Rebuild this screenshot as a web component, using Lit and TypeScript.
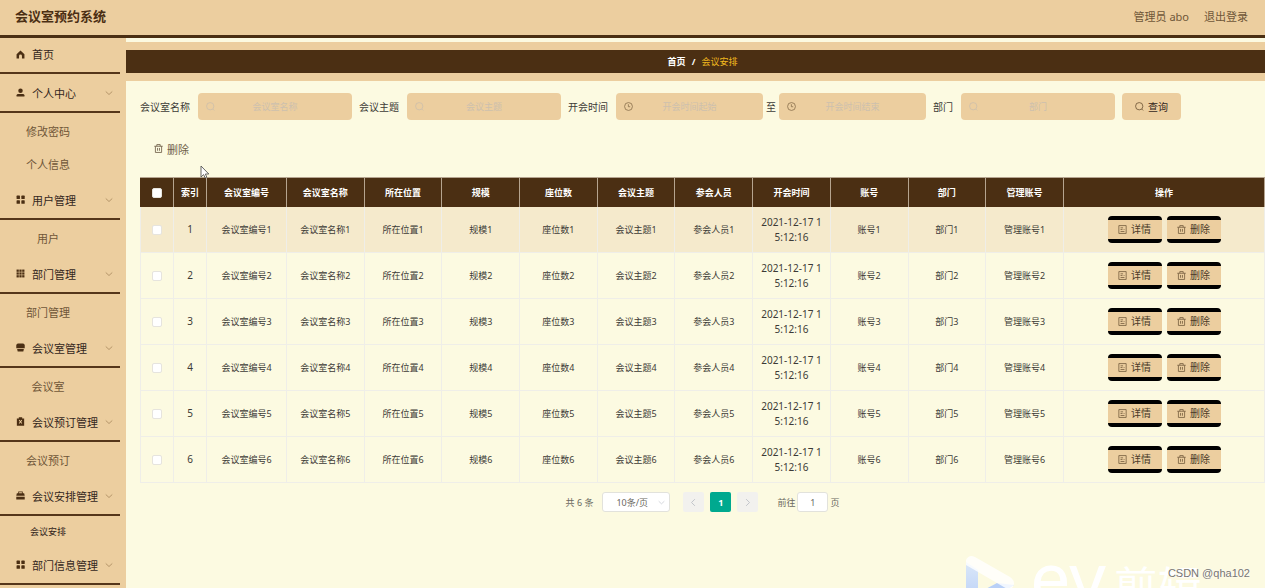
import { LitElement, html, css, svg, nothing } from "lit";
import { customElement, state } from "lit/decorators.js";
import { classMap } from "lit/directives/class-map.js";

interface MenuGroup {
  label: string;
  icon: string;
  children: { label: string; active?: boolean }[];
}

const MENU: MenuGroup[] = [
  { label: "首页", icon: "home", children: [] },
  { label: "个人中心", icon: "user", children: [{ label: "修改密码" }, { label: "个人信息" }] },
  { label: "用户管理", icon: "menu", children: [{ label: "用户" }] },
  { label: "部门管理", icon: "grid", children: [{ label: "部门管理" }] },
  { label: "会议室管理", icon: "room", children: [{ label: "会议室" }] },
  { label: "会议预订管理", icon: "release", children: [{ label: "会议预订" }] },
  { label: "会议安排管理", icon: "bag", children: [{ label: "会议安排", active: true }] },
  { label: "部门信息管理", icon: "menu", children: [] },
];

const COLUMNS = ["会议室编号", "会议室名称", "所在位置", "规模", "座位数", "会议主题", "参会人员", "开会时间", "账号", "部门", "管理账号"];

const GLYPHS: Record<string, unknown> = {
  home: svg`<path fill="currentColor" d="M8 1 L15 7.5 V15 H10.6 V10.5 A2.6 2.6 0 0 0 5.4 10.5 V15 H1 V7.5 Z"/>`,
  user: svg`<circle cx="8" cy="5" r="4" fill="currentColor"/><path fill="currentColor" d="M1 15 V13 Q1 10.5 4 10.5 H12 Q15 10.5 15 13 V15 Z"/>`,
  menu: svg`<g fill="currentColor"><rect x="1" y="1" width="6" height="6" rx="1"/><rect x="9.5" y="1" width="6" height="6" rx="1"/><rect x="1" y="9.5" width="6" height="6" rx="1"/><rect x="9.5" y="9.5" width="6" height="6" rx="1"/></g>`,
  grid: svg`<g fill="currentColor"><rect x="1" y="1" width="4" height="4"/><rect x="6" y="1" width="4" height="4"/><rect x="11" y="1" width="4" height="4"/><rect x="1" y="6" width="4" height="4"/><rect x="6" y="6" width="4" height="4"/><rect x="11" y="6" width="4" height="4"/><rect x="1" y="11" width="4" height="4"/><rect x="6" y="11" width="4" height="4"/><rect x="11" y="11" width="4" height="4"/></g>`,
  room: svg`<path fill="currentColor" d="M3 1 H13 L15.5 3 V9.5 H.5 V3 Z M2 10.8 H14 L13 15 H3 Z"/>`,
  release: svg`<path fill="currentColor" fill-rule="evenodd" d="M1.5 2.5 H5 V.5 H11 V2.5 H14.5 V15.5 H1.5 Z M5 6 L7 8.5 L5 11 L6 12 L8 9.8 L10 12 L11 11 L9 8.5 L11 6 L10 5 L8 7.3 L6 5 Z"/>`,
  bag: svg`<path fill="currentColor" fill-rule="evenodd" d="M4 4 V1 H12 V4 H14.5 L15.5 8.5 H.5 L1.5 4 Z M5.5 4 H10.5 V2.4 H5.5 Z M.5 10 H15.5 V15 H.5 Z"/>`,
  down: svg`<path class="line" d="M1.5 5 L8 11 L14.5 5"/>`,
  left: svg`<path class="line" d="M10.5 2 L4.5 8 L10.5 14"/>`,
  right: svg`<path class="line" d="M5.5 2 L11.5 8 L5.5 14"/>`,
  search: svg`<circle class="line" cx="7.5" cy="7.5" r="6.5"/><path class="line" d="M12 12.5 L14.5 15"/>`,
  clock: svg`<circle class="line" cx="8" cy="8" r="7"/><path class="line" d="M7.8 4 V8.4 H11"/>`,
  trash: svg`<path class="line" d="M.5 4 H15.5 M5 4 V1 H11 V4 M2.5 4 V15 H13.5 V4 M6.3 7 V12 M9.7 7 V12"/>`,
  doc: svg`<path class="line" d="M1.5 1 H14.5 V15 H1.5 Z M4.5 5 H9 M4.5 8 H8 M4.5 11.5 H11.5 M10 8 H11.5"/>`,
};

const icon = (name: string, cls = "") =>
  html`<svg class="icon ${cls}" viewBox="0 0 16 16" aria-hidden="true">${GLYPHS[name]}</svg>`;

const shared = css`
  * {
    box-sizing: border-box;
  }
  a {
    color: inherit;
    text-decoration: none;
  }
  button,
  input,
  select {
    font: inherit;
    color: inherit;
    margin: 0;
  }
  button {
    cursor: pointer;
  }
  .icon {
    width: 9px;
    height: 9px;
    flex: none;
    display: block;
  }
  .line {
    fill: none;
    stroke: currentColor;
    stroke-width: 1.5;
  }
`;

@customElement("side-menu")
export class SideMenu extends LitElement {
  static styles = [
    shared,
    css`
      :host {
        display: block;
        width: 126px;
        flex: none;
        background: #ecce9f;
        overflow: hidden;
        font-size: 11px;
      }
      .list,
      .sub {
        list-style: none;
        margin: 0;
        padding: 0;
      }
      .head {
        display: flex;
        align-items: center;
        gap: 7px;
        height: 39px;
        margin-right: 6px;
        padding: 0 7px 0 16px;
        border-bottom: 2px solid #55361a;
        color: #33261c;
      }
      .head.first {
        height: 36px;
        padding-bottom: 2px;
      }
      .icon {
        color: #4b2f13;
      }
      .label {
        flex: 1;
        white-space: nowrap;
      }
      .icon.arrow {
        width: 8px;
        height: 8px;
        color: #a38358;
      }
      .sub {
        padding: 1px 0;
      }
      .link {
        display: flex;
        align-items: center;
        justify-content: center;
        height: 33px;
        margin-right: 30px;
        color: #6f5638;
      }
      .link.active {
        height: 28px;
        font-size: 9px;
        color: #33261c;
      }
    `,
  ];

  render() {
    return html`<nav>
      <ul class="list">
        ${MENU.map(
          (g, i) => html`<li>
            <a class=${classMap({ head: true, first: i === 0 })} href="#">
              ${icon(g.icon)}<span class="label">${g.label}</span>${i ? icon("down", "arrow") : nothing}
            </a>
            ${g.children.length
              ? html`<ul class="sub">
                  ${g.children.map(
                    (c) => html`<li><a class=${classMap({ link: true, active: !!c.active })} href="#">${c.label}</a></li>`
                  )}
                </ul>`
              : nothing}
          </li>`
        )}
      </ul>
    </nav>`;
  }
}

@customElement("filter-bar")
export class FilterBar extends LitElement {
  static styles = [
    shared,
    css`
      :host {
        display: block;
        font-size: 10px;
        color: #3c3a36;
      }
      .form {
        display: flex;
        flex-wrap: wrap;
        align-items: center;
        gap: 7px;
      }
      .field {
        display: flex;
        align-items: center;
        gap: 8px;
      }
      .range {
        display: flex;
        align-items: center;
        gap: 3px;
      }
      .box {
        position: relative;
        display: flex;
        align-items: center;
        width: 154px;
        color: #cdbfab;
      }
      .box.time {
        width: 147px;
        color: #8c7350;
      }
      .box .icon {
        position: absolute;
        left: 8px;
      }
      .input {
        width: 100%;
        height: 27px;
        border: 0;
        border-radius: 4px;
        padding: 0 20px;
        background: #ecce9f;
        text-align: center;
        font-size: 9px;
        color: #4b2f13;
      }
      .input::placeholder {
        color: #cdc0ae;
        opacity: 1;
      }
      .query {
        display: flex;
        align-items: center;
        justify-content: center;
        gap: 4px;
        width: 59px;
        height: 27px;
        padding: 0;
        border: 0;
        border-radius: 4px;
        background: #ecce9f;
        color: #33261c;
        font-size: 10px;
      }
      .query .icon {
        color: #6f5638;
      }
    `,
  ];

  private text(id: string, label: string) {
    return html`<div class="field">
      <label for=${id}>${label}</label>
      <div class="box">${icon("search")}<input class="input" id=${id} placeholder=${label} /></div>
    </div>`;
  }

  render() {
    return html`<form class="form" @submit=${(e: Event) => e.preventDefault()}>
      ${this.text("name", "会议室名称")} ${this.text("topic", "会议主题")}
      <div class="field">
        <label for="start">开会时间</label>
        <div class="range">
          <div class="box time">${icon("clock")}<input class="input" id="start" placeholder="开会时间起始" /></div>
          <label for="end">至</label>
          <div class="box time">${icon("clock")}<input class="input" id="end" placeholder="开会时间结束" /></div>
        </div>
      </div>
      ${this.text("dept", "部门")}
      <button class="query" type="submit">${icon("search")}<span>查询</span></button>
    </form>`;
  }
}

@customElement("meeting-table")
export class MeetingTable extends LitElement {
  @state() private rows = [1, 2, 3, 4, 5, 6];

  static styles = [
    shared,
    css`
      :host {
        display: block;
        font-size: 9px;
        color: #3c3a36;
      }
      .table {
        width: 100%;
        table-layout: fixed;
        border-collapse: separate;
        border-spacing: 0;
      }
      .check {
        width: 34px;
      }
      .index {
        width: 33px;
      }
      .code {
        width: 80px;
      }
      .ops {
        width: 201px;
      }
      th {
        height: 30px;
        padding: 0;
        background: #4b2f13;
        color: #fff;
        font-weight: 700;
        border-right: 1px solid #b5a48f;
        border-top: 1px solid #b5a48f;
      }
      td {
        height: 46px;
        padding: 0 7px;
        text-align: center;
        word-break: break-all;
        line-height: 15px;
        border-right: 1px solid #efeee8;
        border-bottom: 1px solid #efeee8;
      }
      tr.hover td {
        background: #f5eacc;
      }
      th:first-child,
      td:first-child,
      .num {
        padding: 0;
      }
      td:first-child {
        border-left: 1px solid #efeee8;
      }
      .num,
      .date {
        font-size: 10px;
      }
      .tick {
        appearance: none;
        display: block;
        width: 10px;
        height: 10px;
        margin: 0 auto;
        border: 1px solid #e6e4de;
        border-radius: 2px;
        background: #fff;
      }
      .tick:checked {
        background: #00a98f;
      }
      .actions {
        display: flex;
        justify-content: center;
        gap: 5px;
      }
      .act {
        display: flex;
        align-items: center;
        justify-content: center;
        gap: 4px;
        width: 54px;
        height: 27px;
        padding: 0;
        border: solid #000;
        border-width: 4px 0;
        border-radius: 4px;
        background: #ecce9f;
        color: #4a3a28;
        font-size: 10px;
        line-height: 15px;
      }
      .act .icon {
        color: #7a6242;
      }
    `,
  ];

  render() {
    return html`<table class="table">
      <colgroup>
        <col class="check" />
        <col class="index" />
        <col class="code" />
        ${COLUMNS.slice(1).map(() => html`<col />`)}
        <col class="ops" />
      </colgroup>
      <thead>
        <tr>
          <th><input class="tick" type="checkbox" aria-label="全选" /></th>
          <th>索引</th>
          ${COLUMNS.map((c) => html`<th>${c}</th>`)}
          <th>操作</th>
        </tr>
      </thead>
      <tbody>
        ${this.rows.map(
          (n) => html`<tr class=${classMap({ hover: n === 1 })}>
            <td><input class="tick" type="checkbox" aria-label="选择" /></td>
            <td class="num">${n}</td>
            ${COLUMNS.map((c) => (c === "开会时间" ? html`<td class="date">2021-12-17 15:12:16</td>` : html`<td>${c}${n}</td>`))}
            <td>
              <div class="actions">
                <button class="act" type="button">${icon("doc")}<span>详情</span></button>
                <button class="act" type="button">${icon("trash")}<span>删除</span></button>
              </div>
            </td>
          </tr>`
        )}
      </tbody>
    </table>`;
  }
}

@customElement("page-bar")
export class PageBar extends LitElement {
  static styles = [
    shared,
    css`
      :host {
        display: flex;
        align-items: center;
        justify-content: center;
        font-size: 9px;
        color: #6a6860;
      }
      .size {
        position: relative;
        display: flex;
        align-items: center;
        margin: 0 13px 0 9px;
      }
      .select {
        appearance: none;
        width: 68px;
        height: 20px;
        padding: 0 12px 0 13px;
        border: 1px solid #e2e2dc;
        border-radius: 3px;
        background: #fff;
      }
      .size .icon {
        position: absolute;
        right: 5px;
        width: 7px;
        height: 7px;
        color: #c0c4cc;
        pointer-events: none;
      }
      .pages {
        display: flex;
        gap: 6px;
      }
      .page {
        display: flex;
        align-items: center;
        justify-content: center;
        width: 21px;
        height: 20px;
        padding: 0;
        border: 0;
        border-radius: 2px;
        background: #f2f1ee;
        color: #b9bcc4;
      }
      .page.current {
        background: #00a98f;
        color: #fff;
        font-weight: 700;
      }
      .jump {
        display: flex;
        align-items: center;
        gap: 2px;
        margin-left: 19px;
      }
      .goto {
        width: 31px;
        height: 20px;
        padding: 0;
        border: 1px solid #e2e2dc;
        border-radius: 3px;
        background: #fff;
        text-align: center;
      }
    `,
  ];

  render() {
    return html`
      <span>共 6 条</span>
      <div class="size">
        <select class="select" aria-label="每页条数">
          <option>10条/页</option>
        </select>
        ${icon("down")}
      </div>
      <div class="pages">
        <button class="page" type="button" aria-label="上一页">${icon("left")}</button>
        <button class="page current" type="button">1</button>
        <button class="page" type="button" aria-label="下一页">${icon("right")}</button>
      </div>
      <div class="jump">
        <label for="goto">前往</label><input class="goto" id="goto" value="1" /><span>页</span>
      </div>
    `;
  }
}

@customElement("app-root")
export class AppRoot extends LitElement {
  static styles = [
    shared,
    css`
      :host {
        position: relative;
        display: flex;
        flex-direction: column;
        height: 100vh;
        overflow: hidden;
        background: #fcfae1;
        font-family: "Noto Sans", "Noto Sans CJK SC", sans-serif;
        font-size: 10px;
      }
      .top {
        display: flex;
        align-items: center;
        justify-content: space-between;
        flex: none;
        height: 38px;
        padding: 0 17px 4px 15px;
        background: #ecce9f;
        border-bottom: 3px solid #4b2f13;
        color: #4b2f13;
      }
      .title {
        margin: 0;
        font-size: 13px;
        font-weight: 700;
      }
      .account {
        display: flex;
        gap: 15px;
        font-size: 11px;
        color: #6f5638;
      }
      .body {
        display: flex;
        flex: 1;
        min-height: 0;
      }
      .main {
        flex: 1;
        min-width: 0;
        padding-top: 4px;
      }
      .crumbs {
        display: flex;
        align-items: center;
        justify-content: center;
        gap: 6px;
        height: 39px;
        padding-left: 14px;
        border: solid #ecce9f;
        border-width: 8px 0;
        background: #4b2f13;
        color: #fff;
        font-size: 9px;
        font-weight: 700;
      }
      .here {
        color: #f0b81e;
        font-weight: 400;
      }
      .content {
        padding: 12px 0 0 14px;
      }
      .remove {
        display: flex;
        align-items: center;
        gap: 4px;
        height: 27px;
        margin: 15px 0;
        padding: 0 14px;
        border: 0;
        background: none;
        font-size: 11px;
        color: #6f5f48;
      }
      .pager {
        margin-top: 9px;
      }
      .cursor {
        position: absolute;
        left: 200px;
        top: 165px;
        width: 10px;
        height: 14px;
      }
      .brand {
        position: absolute;
        left: 966px;
        top: 556px;
        display: flex;
        align-items: baseline;
        gap: 8px;
        padding-left: 64px;
        color: #fff;
        white-space: nowrap;
        line-height: 40px;
      }
      .latin {
        font-size: 72px;
      }
      .han {
        font-size: 44px;
      }
      .logo {
        position: absolute;
        left: 0;
        top: 0;
        width: 49px;
        height: 58px;
      }
      .credit {
        position: absolute;
        right: 15px;
        bottom: 7px;
        font-family: "Liberation Sans", sans-serif;
        font-size: 11px;
        line-height: 16px;
        color: #77756f;
        text-shadow: 0 0 2px #fff, 0 0 1px #fff;
      }
    `,
  ];

  render() {
    return html`
      <header class="top">
        <h1 class="title">会议室预约系统</h1>
        <div class="account"><span>管理员 abo</span><a href="#">退出登录</a></div>
      </header>
      <div class="body">
        <side-menu></side-menu>
        <main class="main">
          <div class="crumbs"><a href="#">首页</a><span>/</span><span class="here">会议安排</span></div>
          <div class="content">
            <filter-bar></filter-bar>
            <button class="remove" type="button">${icon("trash")}<span>删除</span></button>
            <meeting-table></meeting-table>
            <page-bar class="pager"></page-bar>
          </div>
        </main>
      </div>
      <svg class="cursor" viewBox="0 0 10 14" aria-hidden="true">
        <path d="M1 1 V12 L3.6 9.6 L5.2 13 L6.8 12.2 L5.4 9 H8.8 Z" fill="#fff" stroke="#555" stroke-width=".9" />
      </svg>
      <div class="brand">
        <svg class="logo" viewBox="0 0 49 58" aria-hidden="true">
          <defs>
            <linearGradient id="blue" x1="0" y1="0" x2="0" y2="1">
              <stop offset="0" stop-color="#dbe7f8" />
              <stop offset="1" stop-color="#b4cdf8" />
            </linearGradient>
          </defs>
          <path d="M0 6 L12 14 V54 L0 50 Z" fill="url(#blue)" />
          <path d="M14 36 L31 27 L48 29 L12 54 Z" fill="#b9d0f7" />
          <path d="M0 9 V4 Q3 -2 9 1 L44 21 Q50 25 47 31 L43 34 Z" fill="#fff" fill-opacity=".8" />
        </svg>
        <span class="latin">ev</span><span class="han">剪辑</span>
      </div>
      <div class="credit">CSDN @qha102</div>
    `;
  }
}
